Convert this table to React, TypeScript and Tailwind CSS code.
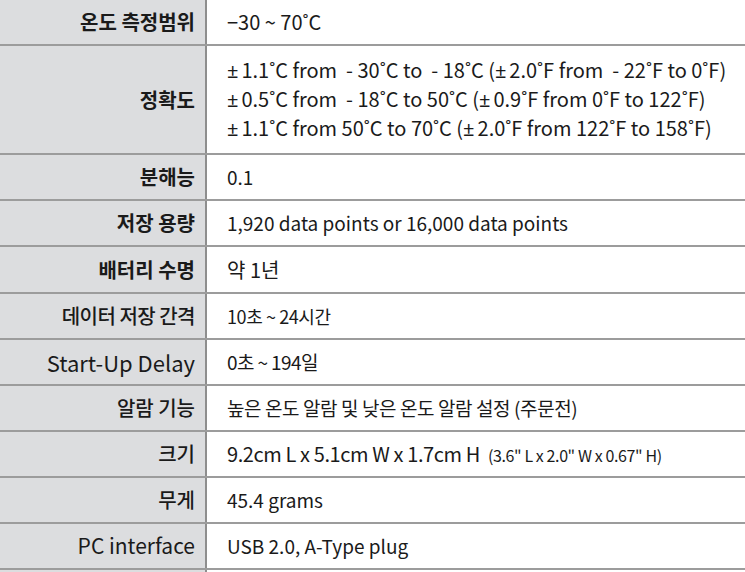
import React from 'react';

type Row = {
  label: React.ReactNode;
  labelClass: string;
  value: React.ReactNode;
  height: string;
};

const Pm = () => (
  <span className="mr-[3px]" style={{ fontFamily: '"Noto Sans", sans-serif' }}>
    ±
  </span>
);

const rows: Row[] = [
  {
    label: '온도 측정범위',
    labelClass: 'text-[20px] font-bold',
    value: <span className="text-[20px]">−30 ~ 70˚C</span>,
    height: 'h-[44px]',
  },
  {
    label: '정확도',
    labelClass: 'text-[20px] font-bold',
    value: (
      <div className="text-[20px] leading-[28px]">
        <div>
          <Pm />1.1˚C from &nbsp;- 30˚C to &nbsp;- 18˚C (<Pm />2.0˚F from &nbsp;- 22˚F to 0˚F)
        </div>
        <div>
          <Pm />0.5˚C from &nbsp;- 18˚C to 50˚C (<Pm />0.9˚F from 0˚F to 122˚F)
        </div>
        <div>
          <Pm />1.1˚C from 50˚C to 70˚C (<Pm />2.0˚F from 122˚F to 158˚F)
        </div>
      </div>
    ),
    height: 'h-[107px]',
  },
  {
    label: '분해능',
    labelClass: 'text-[20px] font-bold',
    value: <span className="text-[19px]">0.1</span>,
    height: 'h-[44px]',
  },
  {
    label: '저장 용량',
    labelClass: 'text-[20px] font-bold',
    value: <span className="text-[19px]">1,920 data points or 16,000 data points</span>,
    height: 'h-[44px]',
  },
  {
    label: '배터리 수명',
    labelClass: 'text-[20px] font-bold',
    value: <span className="text-[20px]">약 1년</span>,
    height: 'h-[45px]',
  },
  {
    label: '데이터 저장 간격',
    labelClass: 'text-[20px] font-medium tracking-[-0.5px]',
    value: <span className="text-[18px] tracking-[-0.4px]">10초 ~ 24시간</span>,
    height: 'h-[44px]',
  },
  {
    label: 'Start-Up Delay',
    labelClass: 'text-[22px] font-normal',
    value: <span className="text-[19px] tracking-[-0.6px]">0초 ~ 194일</span>,
    height: 'h-[44px]',
  },
  {
    label: '알람 기능',
    labelClass: 'text-[20px] font-medium',
    value: <span className="text-[19px] tracking-[-0.4px]">높은 온도 알람 및 낮은 온도 알람 설정 (주문전)</span>,
    height: 'h-[44px]',
  },
  {
    label: '크기',
    labelClass: 'text-[20px] font-medium',
    value: (
      <span className="text-[20px] tracking-[-0.4px]">
        9.2cm L x 5.1cm W x 1.7cm H{' '}
        <span className="text-[16px] tracking-[-0.4px] ml-1">(3.6" L x 2.0" W x 0.67" H)</span>
      </span>
    ),
    height: 'h-[44px]',
  },
  {
    label: '무게',
    labelClass: 'text-[20px] font-medium',
    value: <span className="text-[19px]">45.4 grams</span>,
    height: 'h-[44px]',
  },
  {
    label: 'PC interface',
    labelClass: 'text-[21px] font-normal',
    value: <span className="text-[19px]">USB 2.0, A-Type plug</span>,
    height: 'h-[44px]',
  },
];

export default function App() {
  return (
    <div
      className="w-[745px] h-[572px] overflow-hidden bg-white text-[#1a1a1a]"
      style={{ fontFamily: '"Noto Sans CJK KR", "Noto Sans", sans-serif' }}
    >
      {rows.map((row, i) => (
        <div key={i} className="flex border-b-2 border-[#9c9c9c]">
          <div
            className={`w-[207px] shrink-0 flex items-center justify-end pr-[10px] bg-[#dcdddf] border-r-2 border-[#8e8e8e] ${row.height} ${row.labelClass}`}
          >
            {row.label}
          </div>
          <div className={`flex-1 flex items-center pl-5 ${row.height}`}>{row.value}</div>
        </div>
      ))}
      <div className="flex h-[10px]">
        <div className="w-[207px] shrink-0 bg-[#dcdddf] border-r-2 border-[#8e8e8e]" />
        <div className="flex-1" />
      </div>
    </div>
  );
}
